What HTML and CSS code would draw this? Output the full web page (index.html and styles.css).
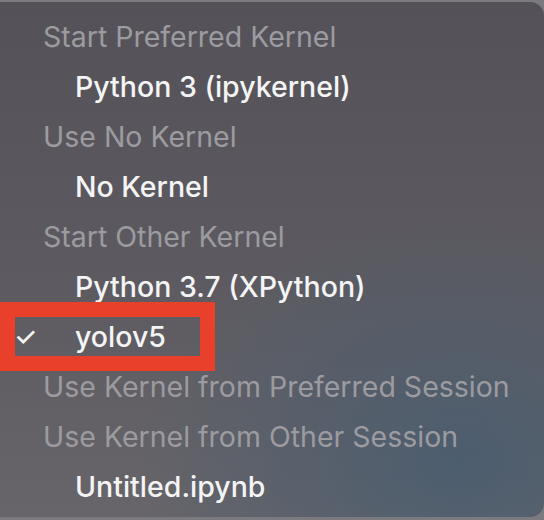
FILE: index.html
```html
<!DOCTYPE html>
<html>
<head>
<meta charset="utf-8">
<link rel="stylesheet" href="styles.css">
</head>
<body>
<div class="menu">
  <div class="row header">Start Preferred Kernel</div>
  <div class="row item">Python 3 (ipykernel)</div>
  <div class="row header">Use No Kernel</div>
  <div class="row item">No Kernel</div>
  <div class="row header">Start Other Kernel</div>
  <div class="row item">Python 3.7 (XPython)</div>
  <div class="row item checked"><span class="check">✓</span>yolov5<span class="mark"></span></div>
  <div class="row header">Use Kernel from Preferred Session</div>
  <div class="row header">Use Kernel from Other Session</div>
  <div class="row item">Untitled.ipynb</div>
</div>
</body>
</html>
```
FILE: styles.css
```css
html, body {
  margin: 0;
  padding: 0;
  background: #7b7a7f;
}
.menu {
  position: relative;
  width: 544px;
  height: 515px;
  margin-top: 2px;
  border-radius: 0 14px 14px 0;
  background:
    radial-gradient(ellipse 320px 240px at 460px 460px, rgba(70,92,112,0.8), rgba(70,92,112,0) 100%),
    linear-gradient(180deg, #545258 0%, #5c5a60 50%, #67656a 100%);
  padding-top: 9px;
  box-sizing: border-box;
  font-family: "Inter", "Liberation Sans", sans-serif;
  font-size: 28.5px;
  overflow: hidden;
}
.row {
  height: 50px;
  display: flex;
  align-items: center;
  position: relative;
  white-space: nowrap;
}
.header {
  padding-left: 43px;
  color: #9c9ba0;
}
.item {
  padding-left: 75px;
  color: #f4f4f5;
  font-weight: 500;
}
.check {
  position: absolute;
  left: 14px;
  top: 10px;
  font-size: 26px;
  color: #f4f4f5;
}
.mark {
  position: absolute;
  left: 0;
  top: -9px;
  width: 185px;
  height: 39px;
  border: 15px solid #e8402a;
}
```
